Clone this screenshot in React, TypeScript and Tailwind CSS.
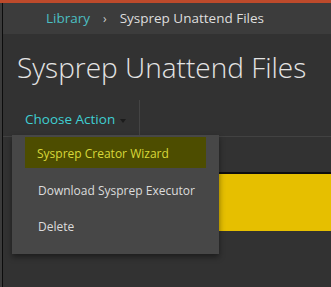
import React from "react";

export default function App() {
  return (
    <div
      className="relative w-[331px] h-[287px] overflow-hidden bg-[#323232]"
      style={{ fontFamily: '"Open Sans", "Noto Sans", sans-serif' }}
    >
      <div className="h-[3px] bg-[#bd4a2b]" />
      <div className="flex h-[284px]">
        <div className="w-[2px] bg-[#3b3b3b]" />
        <div className="w-px bg-[#0c0c0c]" />
        <div className="flex-1 flex flex-col">
          {/* breadcrumb */}
          <div className="h-[31px] bg-[#3c3c3c] flex items-center pl-[43px] text-[13.5px] leading-none whitespace-nowrap">
            <span className="text-[#4bbfc2]">Library</span>
            <span className="text-[#cfcfcf] mx-[13px] text-[12px]">›</span>
            <span className="text-[#dedede]">Sysprep Unattend Files</span>
          </div>
          {/* title */}
          <div className="h-[66px] flex items-center pl-[14px]">
            <h1 className="text-[28px] font-light text-[#e4e4e4] leading-none whitespace-nowrap">
              Sysprep Unattend Files
            </h1>
          </div>
          {/* action bar */}
          <div className="h-[37px] flex border-b border-[#424242]">
            <div className="w-[137px] flex items-center pl-[22px] pt-[4px] border-r border-[#444] whitespace-nowrap">
              <span className="text-[13.5px] text-[#3fcfd2] leading-none">Choose Action</span>
              <span className="ml-[5px] mt-[2px] w-0 h-0 border-l-[3px] border-r-[3px] border-t-[4px] border-l-transparent border-r-transparent border-t-[#1c1c1c]" />
            </div>
          </div>
          {/* yellow banner */}
          <div className="mt-[35px] ml-[40px] h-[59px] border-t-2 border-[#0e0e0e] bg-[#e6bf00]" />
        </div>
      </div>
      {/* dropdown menu */}
      <div className="absolute left-[12px] top-[135px] w-[207px] h-[119px] bg-[#474747] shadow-[0_3px_6px_rgba(0,0,0,0.45)] pt-[2px] text-[12px] leading-none whitespace-nowrap">
        <div className="mx-[13px] h-[31px] bg-[#4d4d00] flex items-center pt-[3px] pl-[12px] text-[#d8d83a]">
          Sysprep Creator Wizard
        </div>
        <div className="h-[40px] flex items-center pt-[5px] pl-[26px] text-[#dcdcdc]">
          Download Sysprep Executor
        </div>
        <div className="h-[34px] flex items-center pt-[3px] pl-[26px] text-[#dcdcdc]">
          Delete
        </div>
      </div>
    </div>
  );
}
